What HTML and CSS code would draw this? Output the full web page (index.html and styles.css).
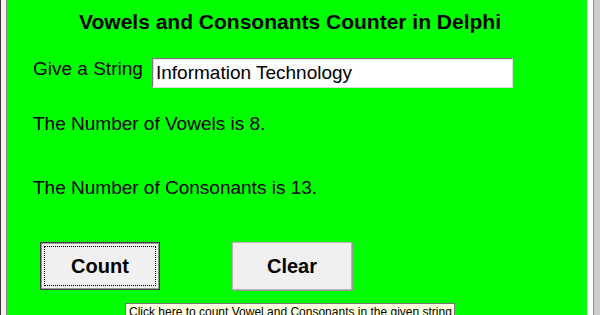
FILE: index.html
```html
<!DOCTYPE html>
<html>
<head>
<meta charset="utf-8">
<link rel="stylesheet" href="styles.css">
</head>
<body>
<div class="window">
  <div class="frame-left"></div>
  <div class="panel">
    <h1 class="title">Vowels and Consonants Counter in Delphi</h1>
    <div class="row">
      <span class="label">Give a String</span>
      <div class="input">Information Technology</div>
    </div>
    <p class="result vowels">The Number of Vowels is 8.</p>
    <p class="result consonants">The Number of Consonants is 13.</p>
    <div class="buttons">
      <button class="btn btn-default"><span class="focus">Count</span></button>
      <button class="btn">Clear</button>
    </div>
    <div class="tooltip">Click here to count Vowel and Consonants in the given string</div>
  </div>
  <div class="frame-right"></div>
</div>
</body>
</html>
```
FILE: styles.css
```css
html, body {
  margin: 0;
  padding: 0;
  width: 600px;
  height: 315px;
  overflow: hidden;
  font-family: "Liberation Sans", Arial, sans-serif;
  background: #d8d8d8;
}
.window {
  display: flex;
  width: 600px;
  height: 315px;
}
.frame-left {
  width: 5px;
  border-left: 1px solid #3a3a3a;
  border-right: 1px solid #8a8a8a;
  background: #f2f2f2;
}
.panel {
  position: relative;
  width: 554px;
  padding: 10px 0 0 26px;
  background: #00ff00;
  color: #000;
}
.frame-right {
  flex: 1;
  border-left: 6px solid #ffffff;
  background: linear-gradient(to right, #8c8c8c 0 1px, #cfcfcf 1px);
}
.title {
  margin: 0 0 0 -26px;
  padding-right: 14px;
  font-size: 21px;
  line-height: 24px;
  font-weight: bold;
  text-align: center;
}
.row {
  display: flex;
  align-items: flex-start;
  margin-top: 24px;
}
.label {
  width: 119px;
  font-size: 19px;
  line-height: 22px;
}
.input {
  width: 356px;
  height: 28px;
  border: 1px solid #7a7a7a;
  border-right-color: #dcdcdc;
  border-bottom-color: #dcdcdc;
  box-shadow: inset 1px 1px 0 #e0e0e0;
  background: #fff;
  font-size: 19px;
  line-height: 28px;
  padding: 0 0 0 3px;
}
.result {
  margin: 0;
  font-size: 19px;
  line-height: 22px;
}
.vowels { margin-top: 25px; }
.consonants { margin-top: 42px; }
.buttons {
  display: flex;
  gap: 72px;
  margin-top: 43px;
  margin-left: 7px;
}
.btn {
  width: 120px;
  height: 48px;
  padding: 0;
  background: #f0f0f0;
  border: 1px solid #b5b5b5;
  box-shadow: 1px 1px 0 #9a9a9a;
  font-family: "Liberation Sans", Arial, sans-serif;
  font-weight: bold;
  font-size: 20px;
  color: #000;
  display: flex;
  align-items: center;
  justify-content: center;
}
.btn-default {
  border: 1px solid #3c3c3c;
  box-shadow: inset 0 0 0 1px #9a9a9a;
  padding: 3px;
}
.focus {
  width: 100%;
  height: 100%;
  border: 1px dotted #000;
  box-sizing: border-box;
  display: flex;
  align-items: center;
  justify-content: center;
}
.tooltip {
  position: absolute;
  left: 118px;
  top: 303px;
  width: 325px;
  height: 20px;
  padding-left: 3px;
  background: #ffffe1;
  border: 1px solid #767676;
  font-family: "Liberation Sans", Arial, sans-serif;
  font-size: 12px;
  line-height: 16px;
  color: #000;
  white-space: nowrap;
}
```
